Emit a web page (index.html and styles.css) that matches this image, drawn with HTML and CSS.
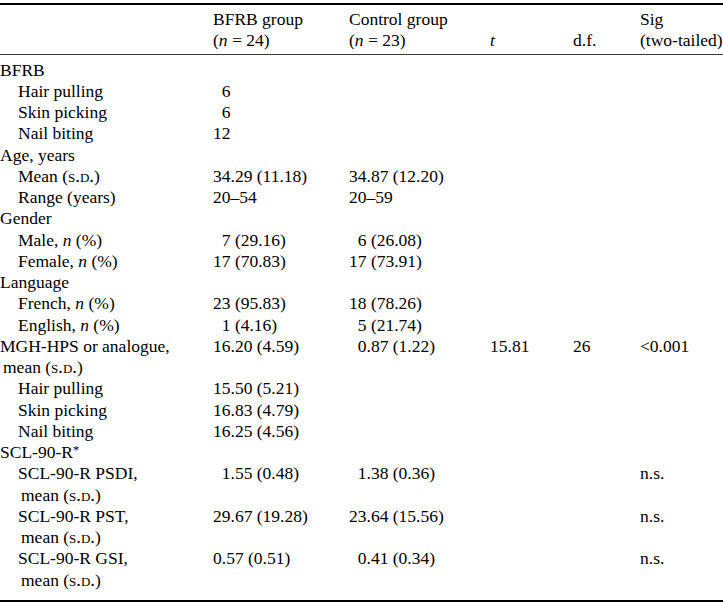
FILE: index.html
```html
<!DOCTYPE html>
<html lang="en">
<head>
<meta charset="utf-8">
<title>BFRB table</title>
<link rel="stylesheet" href="styles.css">
</head>
<body>
<div class="frame">
<table class="data">
<colgroup>
<col class="c-label"><col class="c-bfrb"><col class="c-ctrl"><col class="c-t"><col class="c-df"><col class="c-sig">
</colgroup>
<thead>
<tr>
<th></th>
<th>BFRB group<br>(<i>n</i> = 24)</th>
<th>Control group<br>(<i>n</i> = 23)</th>
<th><i>t</i></th>
<th>d.f.</th>
<th>Sig<br>(two-tailed)</th>
</tr>
</thead>
<tbody>
<tr class="first"><td>BFRB</td><td></td><td></td><td></td><td></td><td></td></tr>
<tr><td class="sub">Hair pulling</td><td><span class="fig">6</span></td><td></td><td></td><td></td><td></td></tr>
<tr><td class="sub">Skin picking</td><td><span class="fig">6</span></td><td></td><td></td><td></td><td></td></tr>
<tr><td class="sub">Nail biting</td><td>12</td><td></td><td></td><td></td><td></td></tr>
<tr><td>Age, years</td><td></td><td></td><td></td><td></td><td></td></tr>
<tr><td class="sub">Mean (<span class="sc">s.d.</span>)</td><td>34.29 (11.18)</td><td>34.87 (12.20)</td><td></td><td></td><td></td></tr>
<tr><td class="sub">Range (years)</td><td>20–54</td><td>20–59</td><td></td><td></td><td></td></tr>
<tr><td>Gender</td><td></td><td></td><td></td><td></td><td></td></tr>
<tr><td class="sub">Male, <i>n</i> (%)</td><td><span class="fig">7 (29.16)</span></td><td><span class="fig">6 (26.08)</span></td><td></td><td></td><td></td></tr>
<tr><td class="sub">Female, <i>n</i> (%)</td><td>17 (70.83)</td><td>17 (73.91)</td><td></td><td></td><td></td></tr>
<tr><td>Language</td><td></td><td></td><td></td><td></td><td></td></tr>
<tr><td class="sub">French, <i>n</i> (%)</td><td>23 (95.83)</td><td>18 (78.26)</td><td></td><td></td><td></td></tr>
<tr><td class="sub">English, <i>n</i> (%)</td><td><span class="fig">1 (4.16)</span></td><td><span class="fig">5 (21.74)</span></td><td></td><td></td><td></td></tr>
<tr><td>MGH-HPS or analogue,<span class="cont">mean (<span class="sc">s.d.</span>)</span></td><td>16.20 (4.59)</td><td><span class="fig">0.87 (1.22)</span></td><td>15.81</td><td>26</td><td>&lt;0.001</td></tr>
<tr><td class="sub">Hair pulling</td><td>15.50 (5.21)</td><td></td><td></td><td></td><td></td></tr>
<tr><td class="sub">Skin picking</td><td>16.83 (4.79)</td><td></td><td></td><td></td><td></td></tr>
<tr><td class="sub">Nail biting</td><td>16.25 (4.56)</td><td></td><td></td><td></td><td></td></tr>
<tr><td>SCL-90-R<span class="ast">*</span></td><td></td><td></td><td></td><td></td><td></td></tr>
<tr><td class="sub">SCL-90-R PSDI,<span class="cont">mean (<span class="sc">s.d.</span>)</span></td><td><span class="fig">1.55 (0.48)</span></td><td><span class="fig">1.38 (0.36)</span></td><td></td><td></td><td>n.s.</td></tr>
<tr><td class="sub">SCL-90-R PST,<span class="cont">mean (<span class="sc">s.d.</span>)</span></td><td>29.67 (19.28)</td><td>23.64 (15.56)</td><td></td><td></td><td>n.s.</td></tr>
<tr class="last"><td class="sub">SCL-90-R GSI,<span class="cont">mean (<span class="sc">s.d.</span>)</span></td><td>0.57 (0.51)</td><td><span class="fig">0.41 (0.34)</span></td><td></td><td></td><td>n.s.</td></tr>
</tbody>
</table>
</div>
</body>
</html>
```

FILE: styles.css
```css
html, body {
  margin: 0;
  padding: 0;
  background: #fff;
}

body {
  font-family: "Liberation Serif", "Times New Roman", serif;
  font-size: 17.5px;
  line-height: 21.25px;
  color: #000;
}

.frame {
  margin-top: 3px;
  width: 723px;
  border-top: 2px solid #000;
  border-bottom: 2px solid #000;
}

.data {
  width: 100%;
  border-collapse: collapse;
  table-layout: fixed;
}

.c-label { width: 213px; }
.c-bfrb { width: 136px; }
.c-ctrl { width: 141px; }
.c-t { width: 83px; }
.c-df { width: 67px; }
.c-sig { width: 83px; }

.data th {
  font-weight: normal;
  text-align: left;
  vertical-align: bottom;
  padding: 4px 0 2px 0;
  border-bottom: 1px solid #3a3a3a;
  white-space: nowrap;
}

.data td {
  padding: 0;
  vertical-align: top;
  white-space: nowrap;
}

.data tr.first td {
  padding-top: 5px;
}

.data tr.last td {
  padding-bottom: 9px;
}

.sub {
  padding-left: 18px !important;
}

.cont {
  display: block;
  padding-left: 3px;
}

.fig {
  padding-left: 0.5em;
}

.sc {
  font-variant: small-caps;
  font-size: 1.06em;
  line-height: 1;
}

.ast {
  font-size: 0.72em;
  line-height: 0;
  vertical-align: 0.32em;
}
```
